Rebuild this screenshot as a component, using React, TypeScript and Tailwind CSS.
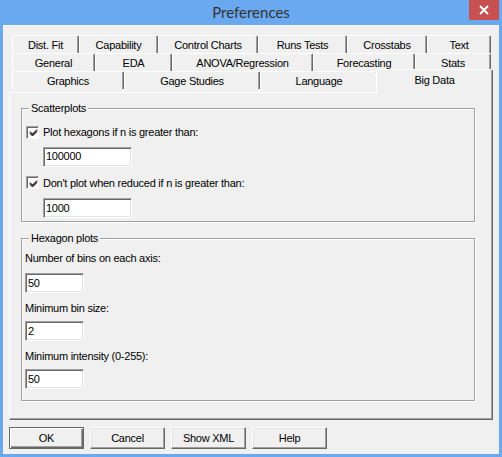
import React from 'react';

const rows = [
    [
        { label: 'Dist. Fit', w: 'w-[67px]' },
        { label: 'Capability', w: 'w-[79px]' },
        { label: 'Control Charts', w: 'w-[100px]' },
        { label: 'Runs Tests', w: 'w-[89px]' },
        { label: 'Crosstabs', w: 'w-[80px]' },
        { label: 'Text', w: 'w-[64px]' },
    ],
    [
        { label: 'General', w: 'w-[83px]' },
        { label: 'EDA', w: 'w-[77px]' },
        { label: 'ANOVA/Regression', w: 'w-[141px]' },
        { label: 'Forecasting', w: 'w-[102px]' },
        { label: 'Stats', w: 'w-[76px]' },
    ],
    [
        { label: 'Graphics', w: 'w-[112px]' },
        { label: 'Gage Studies', w: 'w-[136px]' },
        { label: 'Language', w: 'w-[118px]' },
        { label: 'Big Data', w: 'w-[113px]', active: true },
    ],
];

const Tab = ({ label, w, active }: { label: string; w: string; active?: boolean }) =>
    active ? (
        <div
            className={`relative z-10 -mx-[2px] -mt-[2px] -mb-[1px] flex h-[21px] ${w} box-content items-start justify-center rounded-t-[2px] border-l border-t border-r border-white border-r-[#696969] bg-[#f0f0f0] px-[1px] pt-[2px] shadow-[inset_-1px_0_0_#a0a0a0]`}
        >
            {label}
        </div>
    ) : (
        <div
            className={`flex h-[18px] ${w} items-center justify-center rounded-t-[2px] border-l border-t border-r border-white border-r-[#696969] bg-[#f0f0f0] pt-[1px] shadow-[inset_-1px_0_0_#a0a0a0]`}
        >
            {label}
        </div>
    );

const Checkbox = () => (
    <div className="flex h-[13px] w-[13px] items-center justify-center border-l border-t border-[#a0a0a0] border-r border-b border-r-white border-b-white bg-white shadow-[inset_1px_1px_0_#696969]">
        <svg width="9" height="9" viewBox="0 0 9 9" className="ml-[1px] mt-[1px]">
            <path d="M1 3.5 L3.5 6 L8 1.5 M1 4.5 L3.5 7 L8 2.5 M1 5.5 L3.5 8 L8 3.5" stroke="#000" strokeWidth="1" fill="none" />
        </svg>
    </div>
);

const Field = ({ value, w }: { value: string; w: string }) => (
    <div
        className={`flex h-[20px] ${w} items-center border-l border-t border-[#a0a0a0] border-r border-b border-r-white border-b-white bg-white pl-[2px] shadow-[inset_1px_1px_0_#696969,inset_-1px_-1px_0_#e3e3e3]`}
    >
        {value}
    </div>
);

const Group = ({ title, className, children }: { title: string; className: string; children: React.ReactNode }) => (
    <div className={`relative w-[454px] border border-[#a0a0a0] shadow-[inset_1px_1px_0_white,1px_1px_0_white] ${className}`}>
        <span className="absolute left-[7px] top-[-8px] bg-[#f0f0f0] px-[2px] leading-[14px]">{title}</span>
        {children}
    </div>
);

const Button = ({ label, isDefault }: { label: string; isDefault?: boolean }) => (
    <div
        className={`flex h-[22px] w-[75px] items-center justify-center bg-[#f0f0f0] ${
            isDefault
                ? 'border border-[#696969] shadow-[inset_1px_1px_0_white,inset_-1px_-1px_0_#696969,inset_-2px_-2px_0_#a0a0a0]'
                : 'border-l border-t border-white border-r border-b border-r-[#696969] border-b-[#696969] shadow-[inset_-1px_-1px_0_#a0a0a0,inset_1px_1px_0_#e3e3e3]'
        }`}
    >
        {label}
    </div>
);

export default function App() {
    return (
        <div className="flex h-[457px] w-[502px] flex-col bg-[#6aa9ef] px-[3px] pb-[3px] font-['Liberation_Sans',Arial,sans-serif] text-[11px] tracking-[-0.25px] text-black">
            <div className="grid h-[25px] grid-cols-[1fr_auto_1fr]">
                <div />
                <div className="pt-[2px] font-['Lato','Liberation_Sans',sans-serif] text-[15px] leading-[20px] tracking-normal text-[#333]">
                    Preferences
                </div>
                <div className="flex justify-end">
                    <div className="flex h-[20px] w-[30px] items-center justify-center bg-[#c75050]">
                        <svg width="10" height="10" viewBox="0 0 10 10">
                            <path d="M1 1 L9 9 M9 1 L1 9" stroke="white" strokeWidth="2" />
                        </svg>
                    </div>
                </div>
            </div>
            <div className="flex flex-1 flex-col border-l border-t border-[#f8f8f8] bg-[#f0f0f0] px-[5px] pt-[9px]">
                <div className="ml-[3px] flex w-[479px] flex-col">
                    {rows.map((row, i) => (
                        <div key={i} className="flex">
                            {row.map(t => (
                                <Tab key={t.label} {...t} />
                            ))}
                        </div>
                    ))}
                </div>
                <div className="h-[328px] w-[484px] border-l border-t border-white border-r border-b border-r-[#696969] border-b-[#696969] pl-[11px] pt-[15px] shadow-[inset_-1px_-1px_0_#a0a0a0]">
                    <Group title="Scatterplots" className="h-[114px] pl-[4px] pt-[15px]">
                        <div className="flex items-center gap-[4px]">
                            <Checkbox />
                            <span>Plot hexagons if n is greater than:</span>
                        </div>
                        <div className="ml-[17px] mt-[6px]">
                            <Field value="100000" w="w-[89px]" />
                        </div>
                        <div className="mt-[8px] flex items-center gap-[4px]">
                            <Checkbox />
                            <span>Don't plot when reduced if n is greater than:</span>
                        </div>
                        <div className="ml-[17px] mt-[7px]">
                            <Field value="1000" w="w-[89px]" />
                        </div>
                    </Group>
                    <Group title="Hexagon plots" className="mt-[16px] h-[163px] pl-[3px] pt-[12px]">
                        <div className="leading-[14px]">Number of bins on each axis:</div>
                        <div className="mt-[8px]">
                            <Field value="50" w="w-[59px]" />
                        </div>
                        <div className="mt-[8px] leading-[14px]">Minimum bin size:</div>
                        <div className="mt-[6px]">
                            <Field value="2" w="w-[59px]" />
                        </div>
                        <div className="mt-[8px] leading-[14px]">Minimum intensity (0-255):</div>
                        <div className="mt-[6px]">
                            <Field value="50" w="w-[59px]" />
                        </div>
                    </Group>
                </div>
                <div className="mt-[7px] flex gap-[6px]">
                    <Button label="OK" isDefault />
                    <Button label="Cancel" />
                    <Button label="Show XML" />
                    <Button label="Help" />
                </div>
            </div>
        </div>
    );
}
